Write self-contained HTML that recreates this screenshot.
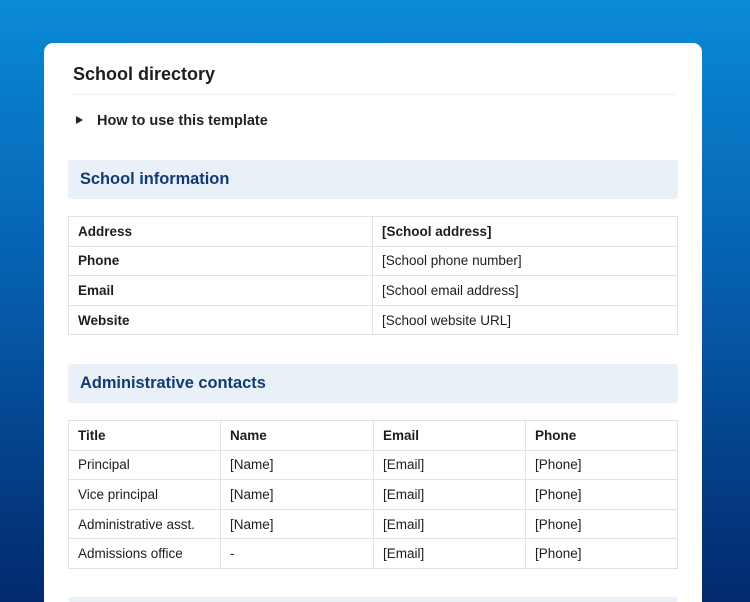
<!DOCTYPE html><html><head><style>
html,body{margin:0;width:750px;height:602px;overflow:hidden}
body{background:linear-gradient(180deg,#0a8ad6 0%,#0660b0 45%,#03296d 100%);font-family:"Liberation Sans",Arial,sans-serif;position:relative}
.card{position:absolute;left:44px;top:43px;width:658px;height:559px;background:#fff;border-radius:9px 9px 0 0;overflow:hidden}
.t{position:absolute;left:29px;top:21px;font-size:18px;font-weight:bold;color:#1d1d1f}
.hr{position:absolute;left:27px;right:27px;top:51px;border-top:1px solid #eee}
.how{position:absolute;left:53px;top:70px;font-size:14.5px;color:#222;font-weight:bold}
.tri{position:absolute;left:32px;top:73px;width:0;height:0;border-left:7px solid #222;border-top:4px solid transparent;border-bottom:4px solid transparent}
.sec{position:absolute;left:24px;width:610px;height:39px;background:#eaf0f8;border-radius:3px;color:#123a74;font-weight:bold;font-size:16.4px;line-height:39px;padding-left:12px;box-sizing:border-box}
table{position:absolute;left:24px;width:610px;border-collapse:collapse;font-size:13.5px;color:#1d1d1f}
td{border:1px solid #e2e2e2;height:29.6px;padding:0 9px;box-sizing:border-box}
b{font-weight:bold}
</style></head><body><div class="card">
<div class="t">School directory</div><div class="hr"></div>
<div class="tri"></div><div class="how">How to use this template</div>
<div class="sec" style="top:117px">School information</div>
<table style="top:173px"><tr><td style="width:304px"><b>Address</b></td><td><b>[School address]</b></td></tr>
<tr><td><b>Phone</b></td><td>[School phone number]</td></tr>
<tr><td><b>Email</b></td><td>[School email address]</td></tr>
<tr><td><b>Website</b></td><td>[School website URL]</td></tr></table>
<div class="sec" style="top:321px">Administrative contacts</div>
<table style="top:377px"><tr><td style="width:152px"><b>Title</b></td><td style="width:153px"><b>Name</b></td><td style="width:152px"><b>Email</b></td><td><b>Phone</b></td></tr>
<tr><td>Principal</td><td>[Name]</td><td>[Email]</td><td>[Phone]</td></tr>
<tr><td>Vice principal</td><td>[Name]</td><td>[Email]</td><td>[Phone]</td></tr>
<tr><td>Administrative asst.</td><td>[Name]</td><td>[Email]</td><td>[Phone]</td></tr>
<tr><td>Admissions office</td><td>-</td><td>[Email]</td><td>[Phone]</td></tr></table>
<div class="sec" style="top:554px;height:5px"></div>
</div></body></html>
